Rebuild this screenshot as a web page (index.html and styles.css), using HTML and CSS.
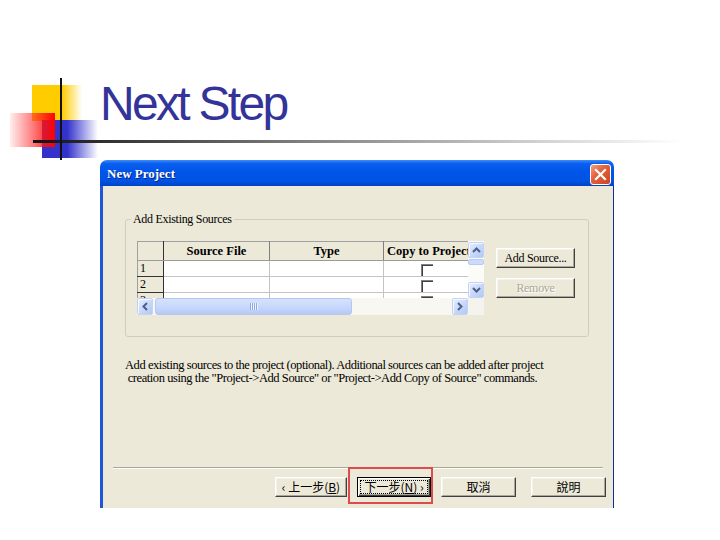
FILE: index.html
```html
<!DOCTYPE html>
<html>
<head>
<meta charset="utf-8">
<title>Next Step</title>
<link rel="stylesheet" href="styles.css">
</head>
<body>
<div class="slide">
  <header class="slide-head">
    <div class="logo">
      <div class="logo-yellow"></div>
      <div class="logo-blue"></div>
      <div class="logo-red"></div>
      <div class="logo-rule"></div>
      <div class="logo-vline"></div>
    </div>
    <h1 class="slide-title">Next Step</h1>
  </header>

  <div class="dialog">
    <div class="titlebar">
      <span class="titlebar-text">New Project</span>
      <span class="close-btn">
        <svg width="13" height="13" viewBox="0 0 13 13"><path d="M2 2 L11 11 M11 2 L2 11" stroke="#fff" stroke-width="2.2" stroke-linecap="square"/></svg>
      </span>
    </div>
    <div class="dlg-body">
      <div class="group">
        <span class="group-label">Add Existing Sources</span>
        <div class="grid-widget">
          <div class="viewport">
            <table class="sheet">
              <colgroup><col class="c0"><col class="c1"><col class="c2"><col class="c3"></colgroup>
              <tr class="hdr"><th class="corner"></th><th>Source File</th><th>Type</th><th>Copy to Project</th></tr>
              <tr><th class="rh">1</th><td></td><td></td><td><span class="chk"></span></td></tr>
              <tr><th class="rh">2</th><td></td><td></td><td><span class="chk"></span></td></tr>
              <tr><th class="rh">3</th><td></td><td></td><td><span class="chk"></span></td></tr>
            </table>
          </div>
          <div class="vscroll">
            <span class="sb-btn sb-v">
              <svg width="9" height="6" viewBox="0 0 9 6"><path d="M1 5 L4.5 1.5 L8 5" fill="none" stroke="#4d6185" stroke-width="2"/></svg>
            </span>
            <span class="vthumb"></span>
            <span class="sb-track"></span>
            <span class="sb-btn sb-v">
              <svg width="9" height="6" viewBox="0 0 9 6"><path d="M1 1 L4.5 4.5 L8 1" fill="none" stroke="#4d6185" stroke-width="2"/></svg>
            </span>
          </div>
          <div class="hscroll">
            <span class="sb-btn sb-h">
              <svg width="6" height="9" viewBox="0 0 6 9"><path d="M5 1 L1.5 4.5 L5 8" fill="none" stroke="#4d6185" stroke-width="2"/></svg>
            </span>
            <span class="hthumb"><span class="grip"></span></span>
            <span class="sb-track"></span>
            <span class="sb-btn sb-h">
              <svg width="6" height="9" viewBox="0 0 6 9"><path d="M1 1 L4.5 4.5 L1 8" fill="none" stroke="#4d6185" stroke-width="2"/></svg>
            </span>
          </div>
          <div class="sb-corner"></div>
        </div>
        <div class="side-buttons">
          <button class="btn side-btn">Add Source...</button>
          <button class="btn side-btn disabled">Remove</button>
        </div>
      </div>

      <p class="desc">Add existing sources to the project (optional). Additional sources can be added after project<br>&nbsp;creation using the "Project-&gt;Add Source" or "Project-&gt;Add Copy of Source" commands.</p>

      <div class="separator"></div>
      <div class="wizard-buttons">
        <button class="btn wiz back">‹ 上一步(<u>B</u>)</button>
        <button class="btn wiz next annotated"><span class="focus">下一步(<u>N</u>) ›</span></button>
        <button class="btn wiz cancel">取消</button>
        <button class="btn wiz help">說明</button>
      </div>
    </div>
  </div>
</div>
</body>
</html>
```

FILE: styles.css
```css
* { box-sizing: border-box; }
html, body { margin: 0; padding: 0; background: #fff; }
body { width: 720px; height: 540px; overflow: hidden; font-family: "Liberation Serif", serif; }

/* ---------- slide header ---------- */
.slide-head { position: relative; height: 160px; }
.logo { position: absolute; left: 0; top: 0; width: 100px; height: 160px; }
.logo-yellow { position: absolute; left: 32px; top: 85px; width: 50px; height: 36px;
  background: linear-gradient(to right, #ffcc00 0, #ffcc00 60%, rgba(255,204,0,0) 100%); }
.logo-blue { position: absolute; left: 42px; top: 120px; width: 56px; height: 38px;
  background: linear-gradient(to right, #3333cc 0, #3333cc 45%, rgba(51,51,204,0) 100%); }
.logo-red { position: absolute; left: 10px; top: 113px; width: 45px; height: 34px;
  background: linear-gradient(to right, rgba(255,90,90,0.1) 0, rgba(255,40,40,0.65) 55%, #ff0000 100%); }
.logo-vline { position: absolute; left: 60px; top: 78px; width: 2px; height: 82px; background: #111; }
.logo-rule { position: absolute; left: 33px; top: 140px; width: 650px; height: 3px;
  background: linear-gradient(to right, #111 0%, #333 12%, #888 45%, #d6d6d6 80%, rgba(235,235,235,0) 100%); }
.slide-title { position: relative; margin: 0; padding: 80px 0 0 100px;
  font: 48px/1 "Liberation Sans", sans-serif; color: #333399; letter-spacing: -2.7px; font-weight: normal; }

/* ---------- dialog ---------- */
.dialog { margin-left: 100px; width: 514px; height: 348px; display: flex; flex-direction: column; }
.titlebar { height: 26px; flex: none; border-radius: 7px 7px 0 0; display: flex; align-items: center;
  justify-content: space-between; padding: 2px 3px 0 7px;
  background: linear-gradient(to bottom, #3d8ef8 0%, #0a5ff0 14%, #0055e8 45%, #0053e3 80%, #0043c6 100%); }
.titlebar-text { color: #fff; font: bold 13px "Liberation Serif", serif; text-shadow: 1px 1px 0 #0a2288; }
.close-btn { align-self: flex-start; margin-top: 2px; width: 21px; height: 21px; border: 1px solid #fff;
  border-radius: 3px; display: flex; align-items: center; justify-content: center;
  background: linear-gradient(135deg, #f3a183 0%, #e2633c 40%, #cc4420 100%); }

.dlg-body { flex: 1; background: #ece9d8; border-left: 3px solid #1f56d8; border-right: 1px solid #0c2f98;
  display: flex; flex-direction: column; padding: 33px 0 11px; }

/* group box */
.group { position: relative; height: 118px; margin: 0 24px 0 22px; border: 1px solid #cfcdbd;
  border-radius: 3px; padding: 21px 0 0 11px; display: flex; align-items: flex-start; gap: 12px; flex: none; }
.group-label { position: absolute; top: -8px; left: 5px; padding: 0 2px; background: #ece9d8;
  font-size: 12px; line-height: 14px; letter-spacing: -0.3px; color: #000; }

/* grid widget */
.grid-widget { width: 347px; height: 74px; display: grid; grid-template-columns: 331px 16px;
  grid-template-rows: 57px 17px; }
.viewport { overflow: hidden; background: #fff; }
.sheet { border-collapse: collapse; table-layout: fixed; width: 335px; }
.sheet .c0 { width: 26px; } .sheet .c1 { width: 106px; } .sheet .c2 { width: 114px; } .sheet .c3 { width: 89px; }
.sheet th, .sheet td { padding: 0; white-space: nowrap; overflow: hidden; }
.sheet tr.hdr th { height: 19px; background: #ece9d8; font: bold 12.5px "Liberation Serif", serif;
  border-top: 1px solid #a0a0a0; border-right: 1px solid #7f7f7f; border-bottom: 1px solid #9a9a9a;
  text-align: center; }
.sheet tr.hdr th:last-child { text-align: left; padding-left: 3px; }
.sheet tr.hdr th.corner { border-left: 1px solid #a0a0a0; border-right: 1px solid #333; }
.sheet th.rh { height: 15px; background: #ece9d8; font: normal 12px/13px "Liberation Serif", serif;
  text-align: left; padding-left: 2px; border-left: 1px solid #a0a0a0; border-right: 1px solid #333;
  border-bottom: 1px solid #333; }
.sheet td { height: 15px; border-right: 1px solid #c4c4c4; border-bottom: 1px solid #c4c4c4; text-align: center;
  line-height: 0; }
.chk { display: inline-block; width: 12px; height: 12px; margin-top: 3px; margin-right: 2px; background: #fff;
  border-top: 1px solid #808080; border-left: 1px solid #808080; box-shadow: inset 1px 1px 0 #404040; }

.vscroll { display: flex; flex-direction: column; background: #fbfbf8; padding-top: 1px; }
.hscroll { display: flex; background: #f8f7f2; }
.sb-corner { background: #f4f3ee; }
.sb-track { flex: 1; }
.sb-btn { flex: none; display: flex; align-items: center; justify-content: center;
  border: 1px solid #c2d3f7; border-radius: 2px;
  background: linear-gradient(135deg, #e6eeff 0%, #c7d7fb 55%, #b3c8f5 100%);
  box-shadow: inset 1px 1px 0 #f4f8ff; }
.sb-v { width: 16px; height: 16px; }
.sb-h { width: 16px; height: 17px; }
.vthumb { flex: none; height: 6px; margin-top: 1px; border: 1px solid #b8cbf4; border-radius: 2px;
  background: #cddafb; }
.hthumb { flex: none; width: 197px; margin-left: 2px; border: 1px solid #b4c8f3; border-radius: 3px;
  background: linear-gradient(to bottom, #d6e2fd 0%, #c6d6fb 60%, #b6c9f5 100%);
  display: flex; align-items: center; justify-content: center; }
.grip { width: 8px; height: 7px;
  background: repeating-linear-gradient(to right, #8fa8e2 0 1px, #eef3ff 1px 2px); }

/* buttons */
.btn { margin: 0; padding: 0; background: #ece9d8; color: #000; cursor: default;
  border: 1px solid; border-color: #fff #404040 #404040 #fff;
  box-shadow: inset -1px -1px 0 #aca899, inset 1px 1px 0 #f4f3ee; }
.side-buttons { display: flex; flex-direction: column; gap: 10px; margin-top: 7px; }
.side-btn { width: 79px; height: 20px; font: 12px/1 "Liberation Serif", serif; letter-spacing: -0.3px; }
.side-btn.disabled { color: #aca899; text-shadow: 1px 1px 0 #fff; }

.desc { margin: 22px 0 0 22px; font-size: 12.5px; line-height: 12.5px; letter-spacing: -0.43px; white-space: nowrap;
  color: #000; }

.separator { margin: auto 10px 0; height: 2px; flex: none; border-top: 1px solid #aca899; border-bottom: 1px solid #fff; }
.wizard-buttons { margin-top: 8px; height: 20px; flex: none; display: flex; justify-content: flex-end; padding-right: 7px; }
.wiz { height: 20px; font: 12px/1 "Noto Sans CJK TC", "Liberation Sans", sans-serif; }
.wiz u { text-decoration: underline; }
.back { width: 72px; }
.next { width: 74px; margin-left: 10px; border: 1px solid #000; padding: 2px;
  box-shadow: inset 1px 1px 0 #fff, inset -1px -1px 0 #404040, inset -2px -2px 0 #aca899; display: flex; }
.cancel { width: 75px; margin-left: 10px; }
.help { width: 75px; margin-left: 15px; }
.focus { flex: 1; display: flex; align-items: center; justify-content: center; border: 1px dotted #000; }

.annotated { position: relative; }
.annotated::after { content: ""; position: absolute; left: -10px; right: -3px; top: -11px; bottom: -8px;
  border: 2px solid #dd4c4c; }
```
